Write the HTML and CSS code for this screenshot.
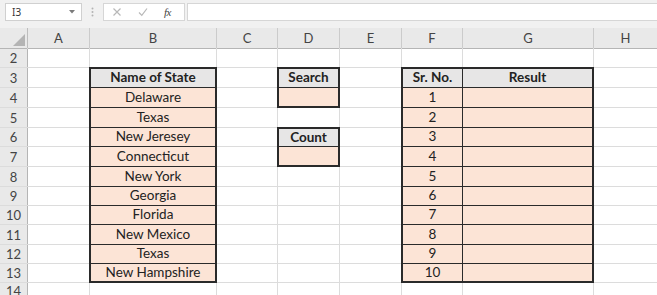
FILE: index.html
```html
<!DOCTYPE html>
<html>
<head>
<meta charset="utf-8">
<link rel="stylesheet" href="styles.css">
</head>
<body>
<div class="toolbar">
  <div class="namebox"><span class="ref">I3</span><svg class="caret" width="6" height="4" viewBox="0 0 6 4"><polygon points="0,0 6,0 3,3.5" fill="#7a7a7a"/></svg></div>
  <div class="dots"><svg width="3" height="10" viewBox="0 0 3 10"><circle cx="1.5" cy="1.5" r="1" fill="#b3b3b3"/><circle cx="1.5" cy="5" r="1" fill="#b3b3b3"/><circle cx="1.5" cy="8.5" r="1" fill="#b3b3b3"/></svg></div>
  <div class="fbtns">
    <svg class="ico" width="10" height="10" viewBox="0 0 10 10"><path d="M1.5 1.5 L8.5 8.5 M8.5 1.5 L1.5 8.5" stroke="#b8b8b8" stroke-width="1.2" fill="none"/></svg>
    <svg class="ico" width="10" height="10" viewBox="0 0 10 10"><path d="M1 5.5 L3.8 8.3 L9 1.5" stroke="#b8b8b8" stroke-width="1.2" fill="none"/></svg>
    <span class="fx">fx</span>
  </div>
  <div class="finput"></div>
</div>
<div class="sheet">
  <div class="corner"><svg width="27" height="20" viewBox="0 0 27 20"><polygon points="25,6 25,18 13,18" fill="#b4b4b4"/></svg></div>
  <div class="ch">A</div><div class="ch">B</div><div class="ch">C</div><div class="ch">D</div><div class="ch">E</div><div class="ch">F</div><div class="ch">G</div><div class="ch">H</div>

  <div class="tbl names">
    <div class="th">Name of State</div>
    <div class="td">Delaware</div>
    <div class="td">Texas</div>
    <div class="td">New Jeresey</div>
    <div class="td">Connecticut</div>
    <div class="td">New York</div>
    <div class="td">Georgia</div>
    <div class="td">Florida</div>
    <div class="td">New Mexico</div>
    <div class="td">Texas</div>
    <div class="td">New Hampshire</div>
  </div>
  <div class="tbl search">
    <div class="th">Search</div>
    <div class="td"></div>
  </div>
  <div class="tbl count">
    <div class="th">Count</div>
    <div class="td"></div>
  </div>
  <div class="tbl results">
    <div class="th">Sr. No.</div><div class="th">Result</div>
    <div class="td">1</div><div class="td"></div>
    <div class="td">2</div><div class="td"></div>
    <div class="td">3</div><div class="td"></div>
    <div class="td">4</div><div class="td"></div>
    <div class="td">5</div><div class="td"></div>
    <div class="td">6</div><div class="td"></div>
    <div class="td">7</div><div class="td"></div>
    <div class="td">8</div><div class="td"></div>
    <div class="td">9</div><div class="td"></div>
    <div class="td">10</div><div class="td"></div>
  </div>

  <div class="rh">2</div><div class="c"></div><div class="c"></div><div class="c"></div><div class="c"></div><div class="c"></div><div class="c"></div><div class="c"></div><div class="c"></div>
  <div class="rh">3</div><div class="c"></div><div class="c"></div><div class="c"></div><div class="c"></div>
  <div class="rh">4</div><div class="c"></div><div class="c"></div><div class="c"></div><div class="c"></div>
  <div class="rh">5</div><div class="c"></div><div class="c"></div><div class="c"></div><div class="c"></div><div class="c"></div>
  <div class="rh">6</div><div class="c"></div><div class="c"></div><div class="c"></div><div class="c"></div>
  <div class="rh">7</div><div class="c"></div><div class="c"></div><div class="c"></div><div class="c"></div>
  <div class="rh">8</div><div class="c"></div><div class="c"></div><div class="c"></div><div class="c"></div><div class="c"></div>
  <div class="rh">9</div><div class="c"></div><div class="c"></div><div class="c"></div><div class="c"></div><div class="c"></div>
  <div class="rh">10</div><div class="c"></div><div class="c"></div><div class="c"></div><div class="c"></div><div class="c"></div>
  <div class="rh">11</div><div class="c"></div><div class="c"></div><div class="c"></div><div class="c"></div><div class="c"></div>
  <div class="rh">12</div><div class="c"></div><div class="c"></div><div class="c"></div><div class="c"></div><div class="c"></div>
  <div class="rh">13</div><div class="c"></div><div class="c"></div><div class="c"></div><div class="c"></div><div class="c"></div>
  <div class="rh">14</div><div class="c"></div><div class="c"></div><div class="c"></div><div class="c"></div><div class="c"></div><div class="c"></div><div class="c"></div><div class="c"></div>
</div>
</body>
</html>
```

FILE: styles.css
```css
html, body {
  margin: 0;
  padding: 0;
}
body {
  width: 657px;
  height: 295px;
  overflow: hidden;
  background: #ffffff;
  font-family: Lato, "Liberation Sans", sans-serif;
}
.toolbar {
  height: 28px;
  box-sizing: border-box;
  padding-top: 3px;
  background: #f1f1f1;
  display: flex;
  align-items: flex-start;
}
.namebox {
  margin-left: 5px;
  width: 77px;
  height: 18px;
  box-sizing: border-box;
  border: 1px solid #d0d0d0;
  background: #ffffff;
  display: flex;
  align-items: center;
  justify-content: space-between;
  padding: 0 6px 0 6px;
}
.ref {
  font-family: "Noto Sans", "Liberation Sans", sans-serif;
  font-size: 10px;
  color: #333333;
}
.dots {
  width: 21px;
  height: 18px;
  display: flex;
  align-items: center;
  justify-content: center;
}
.fbtns {
  width: 82px;
  height: 18px;
  box-sizing: border-box;
  border: 1px solid #d6d6d6;
  background: #ffffff;
  display: flex;
  align-items: center;
  padding-left: 8px;
  gap: 16px;
}
.fx {
  font-family: "Liberation Serif", serif;
  font-style: italic;
  font-size: 11px;
  color: #444444;
  letter-spacing: -0.5px;
}
.finput {
  margin-left: 2px;
  flex: 1;
  height: 18px;
  box-sizing: border-box;
  border: 1px solid #d6d6d6;
  border-right: none;
  background: #ffffff;
}
.sheet {
  display: grid;
  grid-template-columns: 27px 61px 126px 60px 61px 61px 60px 130px 1fr;
  grid-template-rows: 20px 18px 19px 19px 19px 18px 19px 19px 18px 18px 19px 18px 18px 1fr;
  gap: 1px;
  background: #dcdcdc;
  height: 267px;
  overflow: hidden;
}
.c {
  background: #ffffff;
}
.corner {
  background: #e9e9e9;
  box-shadow: 1px 0 0 #bdbdbd, 0 1px 0 #b5b5b5;
}
.corner svg {
  display: block;
}
.ch {
  background: #e9e9e9;
  color: #444444;
  font-size: 13px;
  display: flex;
  align-items: center;
  justify-content: center;
  box-shadow: 1px 0 0 #cbcbcb, 0 1px 0 #b5b5b5;
}
.rh {
  grid-column: 1;
  background: #e9e9e9;
  color: #444444;
  font-size: 13px;
  display: flex;
  align-items: center;
  justify-content: center;
  box-shadow: 1px 0 0 #b5b5b5;
}
.tbl {
  margin: -1px;
  border: 2px solid #2a2a2a;
  background: #2a2a2a;
  display: grid;
  gap: 1px;
}
.names {
  grid-column: 3;
  grid-row: 3 / 14;
  grid-template-rows: 18px 19px 19px 18px 19px 19px 18px 18px 19px 18px 17px;
}
.search {
  grid-column: 5;
  grid-row: 3 / 5;
  grid-template-rows: 18px 18px;
}
.count {
  grid-column: 5;
  grid-row: 6 / 8;
  grid-template-rows: 17px 18px;
}
.results {
  grid-column: 7 / 9;
  grid-row: 3 / 14;
  grid-template-columns: 59px 129px;
  grid-template-rows: 18px 19px 19px 18px 19px 19px 18px 18px 19px 18px 17px;
}
.th, .td {
  display: flex;
  align-items: center;
  justify-content: center;
  font-size: 13.5px;
  line-height: 1;
  color: #222222;
}
.th {
  background: #e7e6e6;
  font-weight: 700;
}
.td {
  background: #fce4d6;
}
```
